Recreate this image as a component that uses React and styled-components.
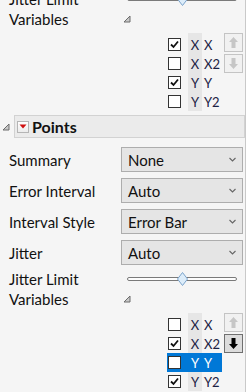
import React from "react";
import styled, { createGlobalStyle, css } from "styled-components";

const GlobalStyle = createGlobalStyle`
  html, body {
    margin: 0;
    padding: 0;
    background: #ffffff;
  }
  body {
    font-family: Lato, "Noto Sans", sans-serif;
    color: #111;
  }
`;

const Viewport = styled.div`
  width: 245px;
  height: 392px;
  overflow: hidden;
  background: #f5f5f5;
  border-right: 1px solid #c9c9c9;
`;

const Content = styled.div`
  display: flex;
  flex-direction: column;
  margin-top: -10px;
`;

const Row = styled.div`
  display: flex;
  align-items: center;
  height: ${(p) => p.h ?? 25}px;
  margin-top: ${(p) => p.mt ?? 0}px;
  padding-left: 9px;
`;

const Label = styled.div`
  width: 112px;
  font-size: 15px;
  line-height: 18px;
  white-space: nowrap;
`;

const Select = styled.div`
  width: 122px;
  height: 25px;
  border: 1px solid #adadad;
  background: #e5e5e5;
  display: flex;
  align-items: center;
  justify-content: space-between;
  padding: 0 6px;
  box-sizing: border-box;
  font-size: 15px;
`;

const SliderWrap = styled.div`
  position: relative;
  width: 110px;
  height: 18px;
  margin-left: 6px;
  display: flex;
  align-items: center;
`;

const Track = styled.div`
  width: 100%;
  height: 4px;
  border: 1px solid #7a7a7a;
  border-radius: 3px;
  background: #fdfdfd;
  box-sizing: border-box;
`;

const Thumb = styled.svg`
  position: absolute;
  left: 50px;
  top: 2px;
`;

const Disclosure = styled.svg`
  display: block;
  margin-left: ${(p) => p.ml || 0}px;
`;

const ListArea = styled.div`
  display: flex;
  margin-top: 5px;
  padding-left: 167px;
  gap: 2px;
`;

const List = styled.div`
  display: flex;
  flex-direction: column;
  padding-top: 2px;
  background: linear-gradient(
    to right,
    transparent 21px,
    #e6e6e6 21px,
    #e6e6e6 35px,
    transparent 35px
  );
`;

const VarRow = styled.div`
  display: grid;
  grid-template-columns: 21px 14px 20px;
  height: 19px;
  align-items: center;
  font-size: 13px;
  color: #1c2244;
  ${(p) =>
    p.selected &&
    css`
      background: #0078d7;
      color: #fff;
    `}
`;

const Check = styled.div`
  width: 13px;
  height: 13px;
  margin-left: 1px;
  border: 1px solid #333;
  background: #fff;
  box-sizing: border-box;
  display: flex;
  align-items: center;
  justify-content: center;
`;

const Role = styled.div`
  text-align: center;
`;

const Name = styled.div`
  padding-left: 2px;
`;

const Buttons = styled.div`
  display: flex;
  flex-direction: column;
  gap: 2px;
`;

const MoveButton = styled.div`
  width: 19px;
  height: 19px;
  box-sizing: border-box;
  border: 1px solid ${(p) => (p.active ? "#6f6f6f" : "#c4c4c4")};
  background: ${(p) => (p.active ? "#dcdcdc" : "#f1f1f1")};
  display: flex;
  align-items: center;
  justify-content: center;
`;

const HeaderRow = styled.div`
  display: flex;
  align-items: center;
  margin-top: 4px;
  height: 23px;
`;

const HeaderBox = styled.div`
  flex: 1;
  height: 23px;
  margin-left: 4px;
  box-sizing: border-box;
  border: 1px solid #d2d2d2;
  background: #ebebeb;
  display: flex;
  align-items: center;
  padding-left: 2px;
  gap: 3px;
  font-size: 16px;
  font-weight: 700;
`;

const RedButton = styled.div`
  width: 12px;
  height: 12px;
  box-sizing: border-box;
  border: 1px solid #b5b5b5;
  background: linear-gradient(#ffffff, #ececec);
  display: flex;
  align-items: center;
  justify-content: center;
`;

const Tri = ({ ml }) => (
  <Disclosure ml={ml} width="8" height="8" viewBox="0 0 8 8">
    <polygon points="7,1 7,7 1,7" fill="#c9c9c9" stroke="#6c6c6c" strokeWidth="1" />
  </Disclosure>
);

const Tick = () => (
  <svg width="11" height="11" viewBox="0 0 11 11">
    <polyline points="2,5.5 4.5,8 9,2.5" fill="none" stroke="#111" strokeWidth="1.8" />
  </svg>
);

const Chevron = () => (
  <svg width="7" height="5" viewBox="0 0 7 5">
    <polyline points="0.5,1 3.5,4 6.5,1" fill="none" stroke="#666" strokeWidth="1.1" />
  </svg>
);

const Arrow = ({ down, active }) => (
  <svg width="11" height="13" viewBox="0 0 11 13" style={{ transform: down ? "rotate(180deg)" : "none" }}>
    <polygon
      points="5.5,1 10,6 7.5,6 7.5,12 3.5,12 3.5,6 1,6"
      fill={active ? "#000" : "#c6c6c6"}
    />
  </svg>
);

function Slider() {
  return (
    <SliderWrap>
      <Track />
      <Thumb width="11" height="14" viewBox="0 0 11 14">
        <polygon points="5.5,0.5 10.5,7 5.5,13.5 0.5,7" fill="#dcecf9" stroke="#7aa3cc" />
      </Thumb>
    </SliderWrap>
  );
}

function VariablesBlock({ items, downActive, mt = 0 }) {
  return (
    <>
      <Row h={18} mt={mt}>
        <Label>Jitter Limit</Label>
        <Slider />
      </Row>
      <Row h={18} mt={2}>
        <Label>Variables</Label>
        <Tri ml={2} />
      </Row>
      <ListArea>
        <List>
          {items.map((it) => (
            <VarRow key={it.name} selected={it.selected}>
              <Check>{it.checked && <Tick />}</Check>
              <Role>{it.role}</Role>
              <Name>{it.name}</Name>
            </VarRow>
          ))}
        </List>
        <Buttons>
          <MoveButton>
            <Arrow />
          </MoveButton>
          <MoveButton active={downActive}>
            <Arrow down active={downActive} />
          </MoveButton>
        </Buttons>
      </ListArea>
    </>
  );
}

const upper = [
  { role: "X", name: "X", checked: true },
  { role: "X", name: "X2", checked: false },
  { role: "Y", name: "Y", checked: true },
  { role: "Y", name: "Y2", checked: false },
];

const lower = [
  { role: "X", name: "X", checked: false },
  { role: "X", name: "X2", checked: true },
  { role: "Y", name: "Y", checked: false, selected: true },
  { role: "Y", name: "Y2", checked: true },
];

const selects = [
  { label: "Summary", value: "None" },
  { label: "Error Interval", value: "Auto" },
  { label: "Interval Style", value: "Error Bar" },
  { label: "Jitter", value: "Auto" },
];

export default function App() {
  return (
    <>
      <GlobalStyle />
      <Viewport>
        <Content>
          <VariablesBlock items={upper} />
          <HeaderRow>
            <Tri ml={2} />
            <HeaderBox>
              <RedButton>
                <svg width="8" height="5" viewBox="0 0 8 5">
                  <polygon points="0.5,0.5 7.5,0.5 4,4.5" fill="#d01010" />
                </svg>
              </RedButton>
              Points
            </HeaderBox>
          </HeaderRow>
          {selects.map((s, i) => (
            <Row key={s.label} h={25} mt={i === 0 ? 9 : 6}>
              <Label>{s.label}</Label>
              <Select>
                <span>{s.value}</span>
                <Chevron />
              </Select>
            </Row>
          ))}
          <VariablesBlock items={lower} downActive mt={5} />
        </Content>
      </Viewport>
    </>
  );
}
